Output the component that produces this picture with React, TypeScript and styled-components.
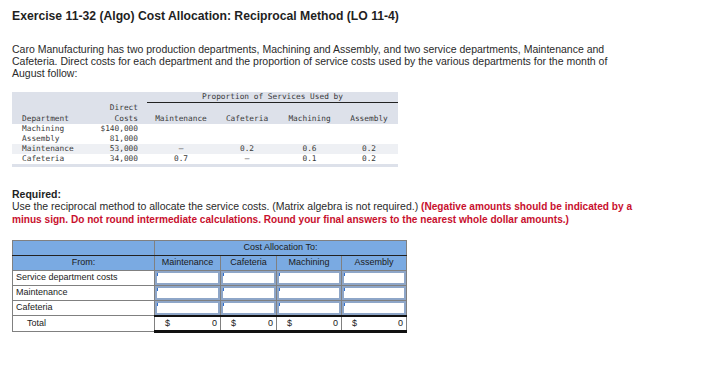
import React from "react";
import styled, { createGlobalStyle } from "styled-components";

const Global = createGlobalStyle`
  html, body { margin: 0; padding: 0; background: #fff; }
  body { font-family: "Liberation Sans", Arial, sans-serif; color: #222; }
`;

const Page = styled.div`
  padding: 8px 12px 20px 12px;
`;

const Title = styled.h1`
  margin: 0;
  font-size: 12.2px;
  line-height: 16px;
  font-weight: 700;
  color: #1f1f1f;
`;

const Para = styled.p`
  margin: 19px 0 0 0;
  font-size: 10.5px;
  line-height: 12px;
  width: 612px;
  color: #2a2a2a;
`;

const DataTable = styled.table`
  margin-top: 13px;
  border-collapse: collapse;
  table-layout: fixed;
  width: 386px;
  font-family: "DejaVu Sans Mono", "Liberation Mono", monospace;
  font-size: 7.8px;
  color: #3a3a3a;
  border-bottom: 3px solid #dde1ea;
`;

const DRow = styled.tr<{ $shade?: boolean }>`
  background: ${(p) => (p.$shade ? "#dde1ea" : "#ffffff")};
`;

const DRowLight = styled.tr`
  background: #eef0f4;
`;

const DCell = styled.td<{ $align?: "left" | "right" | "center"; $h?: number; $rule?: boolean }>`
  padding: 0;
  height: ${(p) => p.$h ?? 10}px;
  line-height: 10px;
  white-space: nowrap;
  text-align: ${(p) => p.$align ?? "center"};
  vertical-align: middle;
  border-bottom: ${(p) => (p.$rule ? "1px solid #222" : "none")};
`;

const DeptCell = styled(DCell)`
  padding-left: 10px;
`;

const CostCell = styled(DCell)`
  padding-right: 9px;
`;

const Required = styled.div`
  margin-top: 21px;
  width: 630px;
  font-size: 10.5px;
  line-height: 12px;
  color: #2a2a2a;
`;

const ReqLabel = styled.div`
  font-weight: 700;
  color: #1f1f1f;
`;

const Plain = styled.span`
  color: #2a2a2a;
`;

const Warn = styled.span`
  color: #c8102e;
  font-weight: 700;
  font-size: 10.1px;
`;

const AnswerTable = styled.table`
  margin-top: 14px;
  border-collapse: collapse;
  table-layout: fixed;
  width: 394px;
  font-family: "Liberation Sans", Arial, sans-serif;
  font-size: 9px;
  color: #1a1a1a;
`;

const HeadCell = styled.th<{ $topRule?: boolean }>`
  background: #7aaae2;
  border: 1px solid #808080;
  border-bottom: ${(p) => (p.$topRule ? "1px solid #222" : "1px solid #808080")};
  font-weight: 400;
  height: 14px;
  padding: 0;
  text-align: center;
  line-height: 13px;
`;

const LabelCell = styled.td<{ $indent?: boolean }>`
  border: 1px solid #808080;
  height: 14px;
  padding: 0 0 0 ${(p) => (p.$indent ? 14 : 3)}px;
  line-height: 13px;
  white-space: nowrap;
`;

const InputCell = styled.td`
  border: 1px solid #808080;
  height: 14px;
  padding: 0;
`;

const InputBox = styled.div`
  position: relative;
  height: 10px;
  margin: 0;
  border: 2px solid #8ea6c8;
  background: #fff;
  &::before {
    content: "";
    position: absolute;
    left: 0;
    top: 0;
    width: 1px;
    height: 3px;
    background: #2f6fd0;
  }
`;

const TotalCell = styled.td`
  border-top: 2px solid #111;
  border-bottom: 3px solid #111;
  border-left: 1px solid #808080;
  border-right: 1px solid #808080;
  height: 13px;
  padding: 0 3px 0 10px;
`;

const TotalInner = styled.div`
  display: flex;
  justify-content: space-between;
  line-height: 12px;
`;

const depts = ["Maintenance", "Cafeteria", "Machining", "Assembly"];

const rows = [
  { name: "Machining", cost: "$140,000", vals: ["", "", "", ""] },
  { name: "Assembly", cost: "81,000", vals: ["", "", "", ""] },
  { name: "Maintenance", cost: "53,000", vals: ["—", "0.2", "0.6", "0.2"], light: true },
  { name: "Cafeteria", cost: "34,000", vals: ["0.7", "—", "0.1", "0.2"] },
];

const answerRows = ["Service department costs", "Maintenance", "Cafeteria"];

export default function App() {
  return (
    <Page>
      <Global />
      <Title>Exercise 11-32 (Algo) Cost Allocation: Reciprocal Method (LO 11-4)</Title>
      <Para>
        Caro Manufacturing has two production departments, Machining and Assembly, and two service departments, Maintenance and
        Cafeteria. Direct costs for each department and the proportion of service costs used by the various departments for the month of
        August follow:
      </Para>

      <DataTable>
        <colgroup>
          <col style={{ width: 78 }} />
          <col style={{ width: 57 }} />
          <col style={{ width: 68 }} />
          <col style={{ width: 64 }} />
          <col style={{ width: 61 }} />
          <col style={{ width: 58 }} />
        </colgroup>
        <tbody>
          <DRow $shade>
            <DCell colSpan={2} />
            <DCell colSpan={4} $rule>Proportion of Services Used by</DCell>
          </DRow>
          <DRow $shade>
            <DeptCell />
            <CostCell $align="right" $h={11}>Direct</CostCell>
            <DCell colSpan={4} />
          </DRow>
          <DRow $shade>
            <DeptCell $align="left">Department</DeptCell>
            <CostCell $align="right">Costs</CostCell>
            {depts.map((d) => (
              <DCell key={d}>{d}</DCell>
            ))}
          </DRow>
          {rows.map((r) => {
            const cells = (
              <>
                <DeptCell $align="left">{r.name}</DeptCell>
                <CostCell $align="right">{r.cost}</CostCell>
                {r.vals.map((v, i) => (
                  <DCell key={i}>{v}</DCell>
                ))}
              </>
            );
            return r.light ? <DRowLight key={r.name}>{cells}</DRowLight> : <DRow key={r.name}>{cells}</DRow>;
          })}
        </tbody>
      </DataTable>

      <Required>
        <ReqLabel>Required:</ReqLabel>
        <Plain>Use the reciprocal method to allocate the service costs. (Matrix algebra is not required.)</Plain>{" "}
        <Warn>
          (Negative amounts should be indicated by a minus sign. Do not round intermediate calculations. Round your final answers to
          the nearest whole dollar amounts.)
        </Warn>
      </Required>

      <AnswerTable>
        <colgroup>
          <col style={{ width: 142 }} />
          <col style={{ width: 66 }} />
          <col style={{ width: 56 }} />
          <col style={{ width: 65 }} />
          <col style={{ width: 65 }} />
        </colgroup>
        <thead>
          <tr>
            <HeadCell $topRule />
            <HeadCell colSpan={4} $topRule>Cost Allocation To:</HeadCell>
          </tr>
          <tr>
            <HeadCell>From:</HeadCell>
            {depts.map((d) => (
              <HeadCell key={d}>{d}</HeadCell>
            ))}
          </tr>
        </thead>
        <tbody>
          {answerRows.map((r) => (
            <tr key={r}>
              <LabelCell>{r}</LabelCell>
              {depts.map((d) => (
                <InputCell key={d}>
                  <InputBox />
                </InputCell>
              ))}
            </tr>
          ))}
          <tr>
            <LabelCell $indent>Total</LabelCell>
            {depts.map((d) => (
              <TotalCell key={d}>
                <TotalInner>
                  <span>$</span>
                  <span>0</span>
                </TotalInner>
              </TotalCell>
            ))}
          </tr>
        </tbody>
      </AnswerTable>
    </Page>
  );
}
